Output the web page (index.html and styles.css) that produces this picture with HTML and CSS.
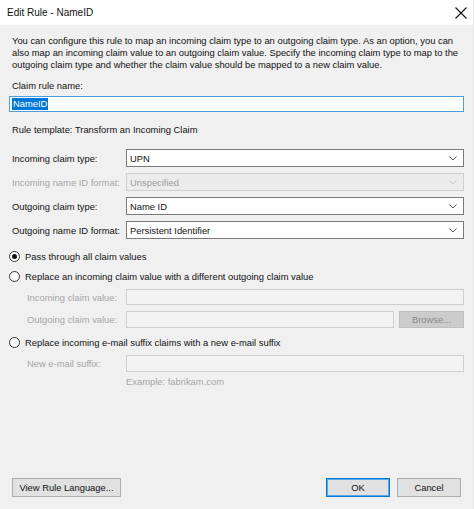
FILE: index.html
```html
<!DOCTYPE html>
<html>
<head>
<meta charset="utf-8">
<link rel="stylesheet" href="styles.css">
</head>
<body>
<div class="window">
  <div class="titlebar">
    <span class="title">Edit Rule - NameID</span>
    <svg class="close" width="12" height="12" viewBox="0 0 12 12"><path d="M0.5 0.5 L11.5 11.5 M11.5 0.5 L0.5 11.5" stroke="#111" stroke-width="1.1" fill="none"/></svg>
  </div>
  <div class="content">
    <p class="desc">You can configure this rule to map an incoming claim type to an outgoing claim type. As an option, you can also map an incoming claim value to an outgoing claim value. Specify the incoming claim type to map to the outgoing claim type and whether the claim value should be mapped to a new claim value.</p>
    <div class="label name-label">Claim rule name:</div>
    <div class="textbox focused"><span class="selected">NameID</span></div>
    <div class="label template-label">Rule template: Transform an Incoming Claim</div>

    <div class="form-grid">
      <div class="row-label">Incoming claim type:</div>
      <div class="select"><span>UPN</span><svg class="chev" width="8" height="5" viewBox="0 0 8 5"><path d="M0.5 0.5 L4 4 L7.5 0.5" stroke="#555" fill="none"/></svg></div>
      <div class="row-label disabled">Incoming name ID format:</div>
      <div class="select is-disabled"><span>Unspecified</span><svg class="chev" width="8" height="5" viewBox="0 0 8 5"><path d="M0.5 0.5 L4 4 L7.5 0.5" stroke="#c4c4c4" fill="none"/></svg></div>
      <div class="row-label">Outgoing claim type:</div>
      <div class="select"><span>Name ID</span><svg class="chev" width="8" height="5" viewBox="0 0 8 5"><path d="M0.5 0.5 L4 4 L7.5 0.5" stroke="#555" fill="none"/></svg></div>
      <div class="row-label">Outgoing name ID format:</div>
      <div class="select"><span>Persistent Identifier</span><svg class="chev" width="8" height="5" viewBox="0 0 8 5"><path d="M0.5 0.5 L4 4 L7.5 0.5" stroke="#555" fill="none"/></svg></div>
    </div>

    <div class="radio first"><span class="dot checked"></span><span>Pass through all claim values</span></div>
    <div class="radio second"><span class="dot"></span><span>Replace an incoming claim value with a different outgoing claim value</span></div>
    <div class="subrow sub-in"><span class="sub-label">Incoming claim value:</span><div class="dis-box"></div></div>
    <div class="subrow sub-out"><span class="sub-label">Outgoing claim value:</span><div class="dis-box"></div><div class="browse">Browse...</div></div>
    <div class="radio third"><span class="dot"></span><span>Replace incoming e-mail suffix claims with a new e-mail suffix</span></div>
    <div class="subrow sub-suffix"><span class="sub-label">New e-mail suffix:</span><div class="dis-box"></div></div>
    <div class="example">Example: fabrikam.com</div>

    <div class="spacer"></div>
    <div class="buttons">
      <div class="btn view">View Rule Language...</div>
      <div class="right-btns">
        <div class="btn ok">OK</div>
        <div class="btn cancel">Cancel</div>
      </div>
    </div>
  </div>
</div>
</body>
</html>
```

FILE: styles.css
```css
html, body {
  margin: 0;
  padding: 0;
  width: 474px;
  height: 509px;
  overflow: hidden;
}
body {
  font-family: "Liberation Sans", Arial, sans-serif;
  font-size: 9.4px;
  color: #000;
  background: #f0f0f0;
}
.window {
  display: flex;
  flex-direction: column;
  height: 509px;
  border-right: 1px solid #e6e6e6;
  box-sizing: border-box;
}
.titlebar {
  height: 25px;
  background: #fff;
  display: flex;
  align-items: center;
  justify-content: space-between;
  padding: 0 6px 0 7px;
  flex: none;
}
.title {
  font-size: 10px;
  color: #111;
}
.close {
  display: block;
}
.content {
  flex: 1;
  display: flex;
  flex-direction: column;
  padding: 0 9px 12px 9px;
  background: #f0f0f0;
}
.desc {
  margin: 10px 0 0 0;
  padding: 0 3px;
  line-height: 12px;
  color: #111;
}
.label {
  line-height: 12px;
  padding-left: 3px;
  color: #111;
}
.name-label { margin-top: 9px; }
.textbox {
  margin-top: 4px;
  height: 16px;
  box-sizing: border-box;
  background: #fff;
  display: flex;
  align-items: center;
  padding-left: 2px;
}
.textbox.focused {
  border: 1px solid #4a9ee0;
}
.selected {
  background: #0078d7;
  color: #fff;
  line-height: 12px;
  padding: 0 1px;
}
.template-label { margin-top: 12px; }

.form-grid {
  margin-top: 13px;
  display: grid;
  grid-template-columns: 117px 1fr;
  grid-auto-rows: 18px;
  row-gap: 6px;
  align-items: center;
}
.row-label {
  padding-left: 3px;
  color: #111;
  white-space: nowrap;
}
.row-label.disabled { color: #a6a6a6; }
.select {
  height: 18px;
  box-sizing: border-box;
  border: 1px solid #7a7a7a;
  background: #fff;
  display: flex;
  align-items: center;
  justify-content: space-between;
  padding: 0 6px 0 3px;
  color: #111;
}
.select.is-disabled {
  border-color: #cfcfcf;
  background: #ececec;
  color: #9c9c9c;
}
.chev { display: block; }

.radio {
  display: flex;
  align-items: center;
  height: 16px;
  gap: 5px;
  color: #111;
}
.radio.first { margin-top: 9px; }
.radio.second { margin-top: 4px; }
.radio.third { margin-top: 6px; }
.dot {
  width: 11px;
  height: 11px;
  box-sizing: border-box;
  border: 1px solid #333;
  border-radius: 50%;
  background: #fff;
  display: flex;
  align-items: center;
  justify-content: center;
  flex: none;
}
.dot.checked::after {
  content: "";
  width: 5px;
  height: 5px;
  border-radius: 50%;
  background: #111;
}
.subrow {
  display: flex;
  align-items: stretch;
}
.sub-in { margin-top: 5px; height: 16px; }
.sub-out { margin-top: 6px; height: 17px; }
.sub-suffix { margin-top: 5px; height: 17px; }
.sub-label {
  width: 99px;
  padding-left: 18px;
  flex: none;
  color: #a6a6a6;
  display: flex;
  align-items: center;
  white-space: nowrap;
}
.dis-box {
  flex: 1;
  border: 1px solid #cfcfcf;
  background: #f3f3f3;
  box-sizing: border-box;
}
.browse {
  width: 65px;
  margin-left: 5px;
  background: #cccccc;
  border: 1px solid #bfbfbf;
  box-sizing: border-box;
  color: #8a8a8a;
  display: flex;
  align-items: center;
  justify-content: center;
  flex: none;
}
.example {
  margin-top: 4px;
  padding-left: 117px;
  line-height: 12px;
  color: #a6a6a6;
}
.spacer { flex: 1; }
.buttons {
  display: flex;
  justify-content: space-between;
  padding: 0 3px;
}
.right-btns {
  display: flex;
  gap: 7px;
}
.btn {
  height: 19px;
  box-sizing: border-box;
  background: #e1e1e1;
  border: 1px solid #adadad;
  display: flex;
  align-items: center;
  justify-content: center;
  color: #111;
}
.btn.view { width: 109px; }
.btn.ok {
  width: 64px;
  border-color: #0078d7;
  box-shadow: inset 0 0 0 1px #5aa6e6;
}
.btn.cancel { width: 64px; }
```
